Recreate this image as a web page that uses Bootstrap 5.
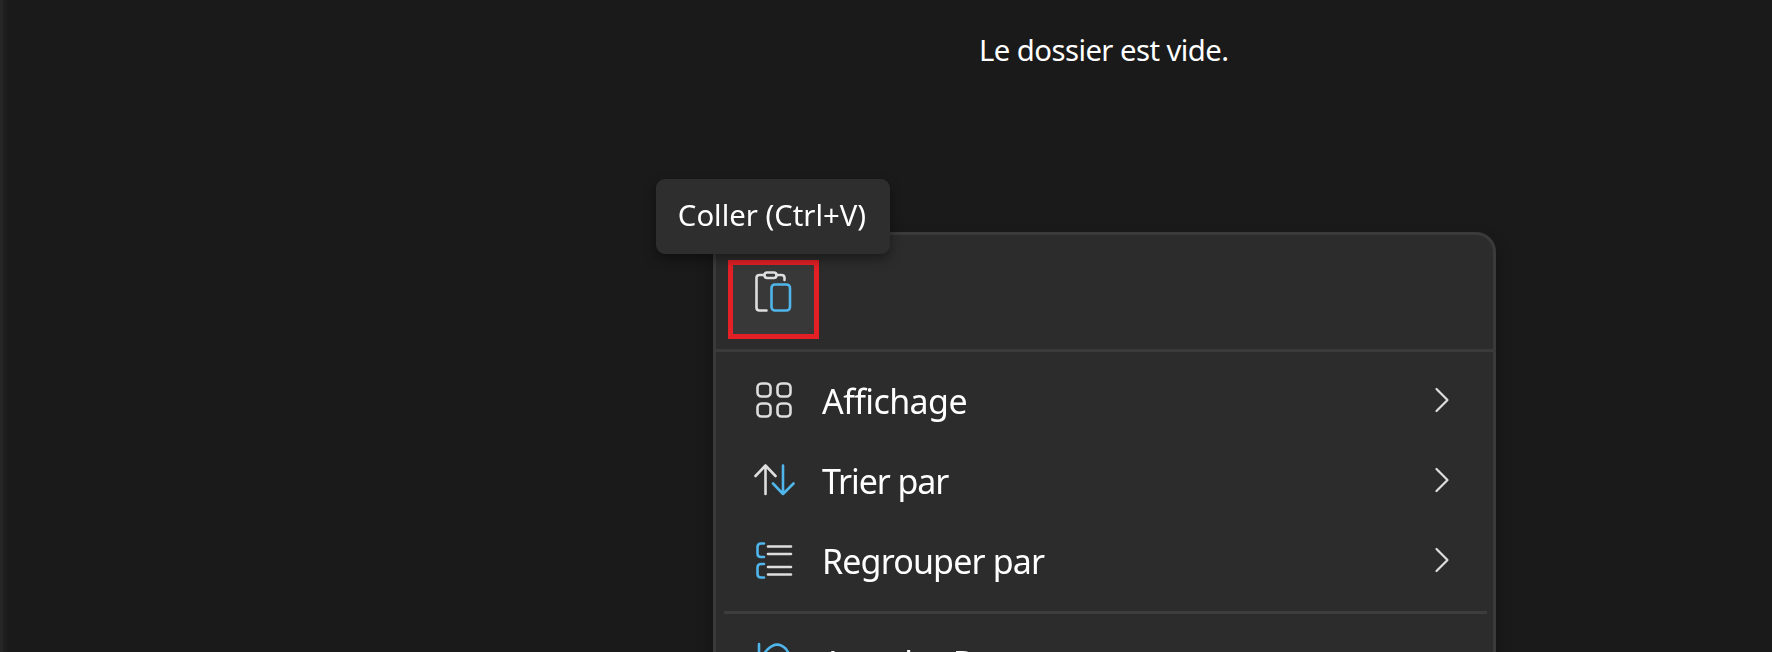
<!DOCTYPE html>
<html lang="fr" data-bs-theme="dark">
<head>
<meta charset="utf-8">
<meta name="viewport" content="width=device-width, initial-scale=1">
<title>Explorateur</title>
<link href="https://cdn.jsdelivr.net/npm/bootstrap@5.3.0/dist/css/bootstrap.min.css" rel="stylesheet">
<style>
body{background:#1a1a1a;color:#fff;font-family:"Noto Sans","Open Sans",sans-serif;height:652px}
.explorer{height:652px;border-left:3px solid #262626;box-shadow:inset 4px 0 0 #1f1f1f}
.empty-text{font-size:29.3px;line-height:40px;margin:30px 0 0 976px;letter-spacing:-.56px}
.ctx{left:713px;top:232px;width:783px;height:600px;background:#2c2c2c;border:3px solid #3a3a3a;border-radius:20px;box-shadow:0 8px 16px rgba(0,0,0,.3)}
.ctx-head{height:117px;border-bottom:3px solid #3a3a3a;padding:25px 0 0 12px}
.paste{width:91px;height:79px;background:#383838!important;border:5px solid #e32026!important;border-radius:0;padding:6px 0 0 21px;display:flex!important;align-items:flex-start}
.ctx-item{height:80px;padding:0 42px 0 36px}
.ctx-item svg{width:48px;height:48px;flex:none}
.ctx-item .lbl{font-size:34px;line-height:40px;margin-left:22px;position:relative;top:1px;letter-spacing:-.6px}
.ctx-item .tight{letter-spacing:-1.1px}
.ctx-item .snug{letter-spacing:-.85px}
.ctx-item .key{font-size:30px;margin-right:53px;top:2px}
.ctx-item svg.chev{width:18px;height:28px;stroke-width:2.2}
.sep{height:3px;background:#3d3d3d;margin:11px 6px 8px 8px}
.tip{left:656px;top:179px;width:234px;height:75px;background:#2e2e2e;border-radius:9px;box-shadow:0 5px 12px rgba(0,0,0,.4);font-size:29.3px;padding:0 2px 1px 0}
svg{fill:none;stroke:#dedede;stroke-width:2.6;stroke-linecap:round;stroke-linejoin:round}
.b{stroke:#4fb5ea}
</style>
<script src="https://cdn.jsdelivr.net/npm/bootstrap@5.3.0/dist/js/bootstrap.bundle.min.js"></script>
</head>
<body class="overflow-hidden">
<main class="explorer position-relative overflow-hidden d-flex">
  <p class="empty-text text-nowrap">Le dossier est vide.</p>
</main>
<div class="ctx position-fixed overflow-hidden">
  <div class="ctx-head">
    <button class="paste btn" aria-label="Coller">
      <svg width="40" height="44" viewBox="0 0 40 44"><path d="M10 4H5.500Q2.500 4 2.500 7V36.500Q2.500 39.500 5.500 39.500H12.500M23 4H27.500Q30.500 4 30.500 7V9"/><rect x="10.500" y="1.500" width="12" height="5.500" rx="2.700"/><rect class="b" x="17.500" y="13.500" width="18.500" height="26" rx="3.500"/></svg>
    </button>
  </div>
  <div class="pt-2">
    <div class="ctx-item d-flex align-items-center">
      <svg viewBox="0 0 48 48"><rect x="5.500" y="7.500" width="13" height="13" rx="4"/><rect x="25.500" y="7.500" width="13" height="13" rx="4"/><rect x="5.500" y="27.500" width="13" height="13" rx="4"/><rect x="25.500" y="27.500" width="13" height="13" rx="4"/></svg>
      <span class="lbl">Affichage</span>
      <svg class="chev ms-auto" viewBox="0 0 18 28"><path d="M3.500 3L14.500 14L3.500 25"/></svg>
    </div>
    <div class="ctx-item d-flex align-items-center">
      <svg viewBox="0 0 48 48"><path d="M13.500 38V9.500M3.500 20L13.500 9.500L23.500 20"/><path class="b" d="M31 9.500V38M21 27.500L31 38L41.500 27.500"/></svg>
      <span class="lbl tight">Trier par</span>
      <svg class="chev ms-auto" viewBox="0 0 18 28"><path d="M3.500 3L14.500 14L3.500 25"/></svg>
    </div>
    <div class="ctx-item d-flex align-items-center">
      <svg viewBox="0 0 48 48"><path class="b" d="M12 7.500H9Q5.500 7.500 5.500 11V17.500Q5.500 21 9 21H12M12 28H9Q5.500 28 5.500 31.500V38Q5.500 41.500 9 41.500H12"/><path d="M16 10.500H39M16 18H39M16 31H39M16 38.500H39"/></svg>
      <span class="lbl snug">Regrouper par</span>
      <svg class="chev ms-auto" viewBox="0 0 18 28"><path d="M3.500 3L14.500 14L3.500 25"/></svg>
    </div>
    <div class="sep"></div>
    <div class="ctx-item d-flex align-items-center">
      <svg viewBox="0 0 48 48"><path class="b" d="M7 6V21H21M7 21L15 12Q25 2 34 11Q41 19 34 27L22 39"/></svg>
      <span class="lbl">Annuler Renommer</span>
      <span class="lbl key ms-auto">Ctrl+Z</span>
    </div>
  </div>
</div>
<div class="tip position-fixed d-flex align-items-center justify-content-center text-nowrap"><span>Coller (Ctrl+V)</span></div>
</body>
</html>
